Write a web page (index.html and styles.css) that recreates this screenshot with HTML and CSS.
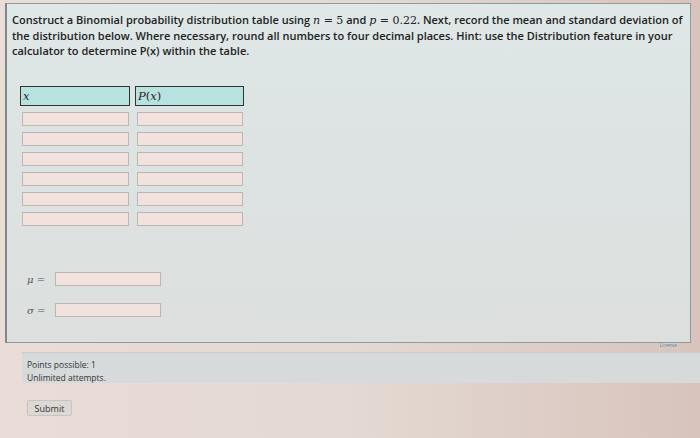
FILE: index.html
```html
<!DOCTYPE html>
<html>
<head>
<meta charset="utf-8">
<link rel="stylesheet" href="styles.css">
</head>
<body>
<div class="page">
  <div class="question">
    <p class="prompt">Construct a Binomial probability distribution table using <span class="m"><i>n</i> = 5</span> and <span class="m"><i>p</i> = 0.22</span>. Next, record the mean and standard deviation of the distribution below. Where necessary, round all numbers to four decimal places. Hint: use the Distribution feature in your calculator to determine P(x) within the table.</p>
    <div class="table">
      <div class="head"><span class="m"><i>x</i></span></div>
      <div class="head"><span class="m"><i>P</i>(<i>x</i>)</span></div>
      <div class="cell"></div><div class="cell"></div>
      <div class="cell"></div><div class="cell"></div>
      <div class="cell"></div><div class="cell"></div>
      <div class="cell"></div><div class="cell"></div>
      <div class="cell"></div><div class="cell"></div>
      <div class="cell"></div><div class="cell"></div>
    </div>
    <div class="stats">
      <div class="stat"><span class="lbl m"><i>μ</i> =</span><div class="cell wide"></div></div>
      <div class="stat"><span class="lbl m"><i>σ</i> =</span><div class="cell wide"></div></div>
    </div>
    <span class="license">License</span>
  </div>
  <div class="info">
    <div>Points possible: 1</div>
    <div>Unlimited attempts.</div>
  </div>
  <button class="submit">Submit</button>
</div>
</body>
</html>
```
FILE: styles.css
```css
html, body {
  margin: 0;
  padding: 0;
}
body {
  width: 700px;
  height: 438px;
  overflow: hidden;
  background: linear-gradient(90deg, #eadcd6 0%, #e4d9d3 50%, #d8c4bc 100%);
  font-family: "Open Sans", "Liberation Sans", sans-serif;
  color: #2a2a2a;
}
.page {
  padding-top: 3px;
}
.question {
  position: relative;
  margin-left: 5px;
  width: 686px;
  height: 340px;
  box-sizing: border-box;
  border: 1px solid #8f9a9a;
  border-left: 2px solid #7d8888;
  background: linear-gradient(180deg, #dfe7e7 0%, #dde3e3 40%, #dcdfde 100%);
  padding: 8px 6px 0 5px;
}
.prompt {
  margin: 0;
  font-size: 11px;
  font-weight: 600;
  line-height: 15px;
  color: #222;
  width: 672px;
}
.m {
  font-family: "DejaVu Serif", "Liberation Serif", serif;
  font-weight: normal;
}
.m i {
  font-style: italic;
}
.table {
  display: grid;
  grid-template-columns: 110px 109px;
  column-gap: 5px;
  row-gap: 6px;
  margin: 28px 0 0 8px;
  width: 224px;
}
.head {
  height: 20px;
  box-sizing: border-box;
  border: 1px solid #333;
  background: #b8e2df;
  font-size: 11.5px;
  line-height: 18px;
  padding-left: 2px;
  color: #222;
}
.cell {
  height: 14px;
  box-sizing: border-box;
  border: 1px solid #bfb5b3;
  background: #f2e2de;
  margin: 0 1px 0 2px;
}
.stats {
  margin: 46px 0 0 15px;
  display: flex;
  flex-direction: column;
  gap: 17px;
}
.stat {
  display: flex;
  align-items: center;
}
.lbl {
  width: 28px;
  font-size: 10px;
  color: #555;
}
.cell.wide {
  width: 106px;
  margin: 0;
}
.license {
  position: absolute;
  right: 12px;
  bottom: -6px;
  font-size: 5px;
  line-height: 5px;
  color: #777;
  background: #cfcfcf;
  padding: 0 1px;
}
.info {
  margin: 9px 0 0 22px;
  height: 31px;
  box-sizing: border-box;
  background: #d6dadb;
  border-top: 1px solid #c8cccc;
  padding: 5px 0 0 5px;
  font-size: 8.5px;
  line-height: 13px;
  color: #333;
}
.submit {
  display: block;
  margin: 17px 0 0 27px;
  height: 16px;
  width: 45px;
  padding: 0;
  border: 1px solid #c9c3c0;
  border-radius: 2px;
  background: #dcd8d6;
  font-family: "Open Sans", "Liberation Sans", sans-serif;
  font-size: 9px;
  color: #333;
}
```
